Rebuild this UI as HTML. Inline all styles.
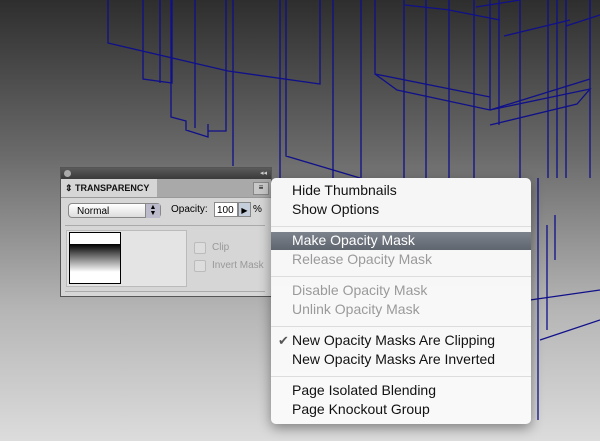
<!DOCTYPE html><html><head><style>
body{margin:0;width:600px;height:441px;overflow:hidden;position:relative;font-family:"Liberation Sans",sans-serif;background:linear-gradient(#2e2e2e 0%,#6a6a6a 35%,#b5b5b5 70%,#dcdcdc 100%)}
svg{position:absolute;left:0;top:0}
.panel{position:absolute;left:60px;top:167px;width:212px;height:130px;background:#d6d6d6;border:1px solid #555;box-sizing:border-box}
.tb{height:11px;background:linear-gradient(#5a5a5a,#3a3a3a)}
.tabrow{height:18px;background:#a9a9a9;position:relative;border-bottom:1px solid #999}
.tab{position:absolute;left:0;top:0;width:96px;height:18px;background:#d6d6d6;font-size:9px;font-weight:bold;line-height:18px;padding-left:4px;box-sizing:border-box;color:#111}
.menu{position:absolute;left:271px;top:178px;width:260px;height:246px;background:rgba(250,250,250,.97);border-radius:5px;box-shadow:0 4px 12px rgba(0,0,0,.4)}
.it{position:absolute;left:21px;font-size:14px;color:#111;line-height:19px}
.dis{color:#9a9a9a}
.sep{position:absolute;left:0;width:260px;height:1px;background:#ddd}
</style></head><body>
<svg width="600" height="441" stroke="#10108a" stroke-width="1.3" fill="none">
<path d="M108 0V43L228 71L320 84V0M143 0V79L172 83V0M160 0V83M171 0V117L186 121V130L208 137V124M195 0V128M226 0V131L208 131M233 0V166M280 0V178M286 0V156L360 178M333 0V178M361 0V178M375 0V74L397 90L490 110V0M375 74L490 97M404 0V178M426 0V178M449 0V178M474 0V178M490 110L590 89L577 104L490 125M499 0V125M490 110L590 79V0M520 0V178M548 0V178M557 0V178M566 0V178M590 0V178M405 5L450 10M449 10L500 20M476 7L520 0M504 36L570 20M566 26L600 15"/>
<path d="M538 178V420M547 225V330M555 215V260M540 340L600 320M530 300L600 290" />
</svg>
<div class="panel"><div class="tb"><div style="position:absolute;left:3px;top:2px;width:7px;height:7px;border-radius:50%;background:#aaa"></div><div style="position:absolute;right:4px;top:1px;font-size:7px;color:#ccc">◂◂</div></div>
<div class="tabrow"><div class="tab">⇕ TRANSPARENCY</div><div style="position:absolute;right:2px;top:3px;width:14px;height:11px;background:#c8c8c8;border:1px solid #888;font-size:8px;line-height:10px;text-align:center">≡</div></div>
<div style="position:absolute;left:7px;top:35px;width:93px;height:15px;background:linear-gradient(#fff,#ddd);border:1px solid #888;border-radius:4px;font-size:10px;line-height:15px;padding-left:8px;box-sizing:border-box">Normal<span style="position:absolute;right:0;top:0;width:14px;height:13px;background:#bbc;border-left:1px solid #888;font-size:7px;text-align:center;line-height:6px;padding-top:1px">▲<br>▼</span></div>
<div style="position:absolute;left:110px;top:36px;font-size:10px">Opacity:</div>
<div style="position:absolute;left:153px;top:34px;width:24px;height:15px;background:#fff;border:1px solid #888;font-size:10px;line-height:15px;padding-left:2px;box-sizing:border-box">100</div>
<div style="position:absolute;left:177px;top:34px;width:13px;height:15px;background:#c5cfdc;border:1px solid #888;font-size:8px;line-height:15px;text-align:center;box-sizing:border-box">▶</div>
<div style="position:absolute;left:192px;top:36px;font-size:10px">%</div>
<div style="position:absolute;left:4px;top:57px;width:200px;height:1px;background:#aaa"></div>
<div style="position:absolute;left:5px;top:62px;width:119px;height:55px;background:#e4e4e4;border:1px solid #bbb"></div>
<div style="position:absolute;left:8px;top:64px;width:50px;height:50px;background:#fff;border:1px solid #000"><div style="margin-top:11px;height:28px;background:linear-gradient(#000,#fff)"></div></div>
<div style="position:absolute;left:133px;top:74px;width:10px;height:10px;border:1px solid #bbb;border-radius:2px;background:#ddd"></div>
<div style="position:absolute;left:151px;top:74px;font-size:10px;color:#999">Clip</div>
<div style="position:absolute;left:133px;top:92px;width:10px;height:10px;border:1px solid #bbb;border-radius:2px;background:#ddd"></div>
<div style="position:absolute;left:151px;top:92px;font-size:10px;color:#999">Invert Mask</div>
<div style="position:absolute;left:4px;top:123px;width:200px;height:1px;background:#aaa"></div>
</div>
<div class="menu">
<div class="it" style="top:3px">Hide Thumbnails</div>
<div class="it" style="top:22px">Show Options</div>
<div class="sep" style="top:48px"></div>
<div style="position:absolute;left:0;top:54px;width:260px;height:18px;background:linear-gradient(#7d838d,#5f656e)"></div>
<div class="it" style="top:53px;color:#fff">Make Opacity Mask</div>
<div class="it dis" style="top:72px">Release Opacity Mask</div>
<div class="sep" style="top:98px"></div>
<div class="it dis" style="top:103px">Disable Opacity Mask</div>
<div class="it dis" style="top:122px">Unlink Opacity Mask</div>
<div class="sep" style="top:148px"></div>
<div class="it" style="top:153px;left:7px;color:#555;font-size:13px">✔</div>
<div class="it" style="top:153px">New Opacity Masks Are Clipping</div>
<div class="it" style="top:172px">New Opacity Masks Are Inverted</div>
<div class="sep" style="top:198px"></div>
<div class="it" style="top:203px">Page Isolated Blending</div>
<div class="it" style="top:222px">Page Knockout Group</div>
</div>
</body></html>
